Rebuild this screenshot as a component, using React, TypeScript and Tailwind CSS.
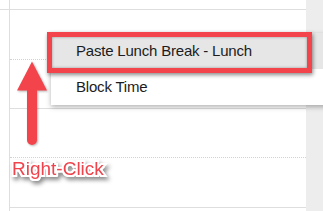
import React from "react";

export default function App() {
  return (
    <div className="relative w-[323px] h-[211px] overflow-hidden bg-white font-['Liberation_Sans',Arial,sans-serif]">
      {/* background calendar grid */}
      <div className="flex h-full w-full">
        <div className="w-[10px] h-full border-r border-[#dedede] shrink-0 flex flex-col">
          <div className="h-[10px] border-b border-[#dedede]" />
        </div>
        <div className="flex-1 h-full flex flex-col">
          <div className="h-[10px] shrink-0 border-b border-[#dedede]" />
          <div className="h-[50px] shrink-0 border-b border-dotted border-[#d2d2d2]" />
          <div className="h-[49px] shrink-0 border-b border-[#dedede]" />
          <div className="h-[49px] shrink-0 border-b border-dotted border-[#d2d2d2]" />
          <div className="h-[50px] shrink-0 border-b border-[#dedede]" />
        </div>
        <div className="w-[17px] h-full shrink-0 bg-[#ededed]" />
      </div>

      {/* context menu */}
      <div className="absolute left-[51px] top-[33px] w-[285px] bg-white shadow-[0_2px_5px_rgba(0,0,0,0.3)] flex flex-col text-[15px] tracking-[-0.2px] text-[#1c1c1c]">
        <div className="h-[36px] flex items-center pl-[25px] bg-[#e6e6e6]">Paste Lunch Break - Lunch</div>
        <div className="h-[36px] flex items-center pl-[25px]">Block Time</div>
      </div>

      {/* red highlight box */}
      <div className="absolute left-[47px] top-[32px] w-[265px] h-[41px] border-[5px] border-[#f3444b] shadow-[1px_2px_4px_rgba(0,0,0,0.45),inset_0_0_3px_rgba(0,0,0,0.35)]" />

      {/* arrow */}
      <svg
        className="absolute left-[12px] top-[58px] drop-shadow-[1px_1px_1px_rgba(0,0,0,0.3)]"
        width="40"
        height="92"
        viewBox="0 0 40 92"
      >
        <path d="M20 3.5 L35 32.5 L25 32.5 L25 82 A5 5 0 0 1 15 82 L15 32.5 L5 32.5 Z" fill="#f3444b" />
      </svg>

      {/* label */}
      <div className="absolute left-[12px] top-[159px] drop-shadow-[2px_3px_2px_rgba(0,0,0,0.45)]">
        <div className="text-[19px] leading-none text-[#f0434c] [-webkit-text-stroke:4px_#ffffff] [paint-order:stroke_fill] [text-shadow:1.5px_0_0_#fff,-1.5px_0_0_#fff,0_1.5px_0_#fff,0_-1.5px_0_#fff,1.5px_1.5px_0_#fff,-1.5px_-1.5px_0_#fff,1.5px_-1.5px_0_#fff,-1.5px_1.5px_0_#fff]">
          Right-Click
        </div>
      </div>
    </div>
  );
}
